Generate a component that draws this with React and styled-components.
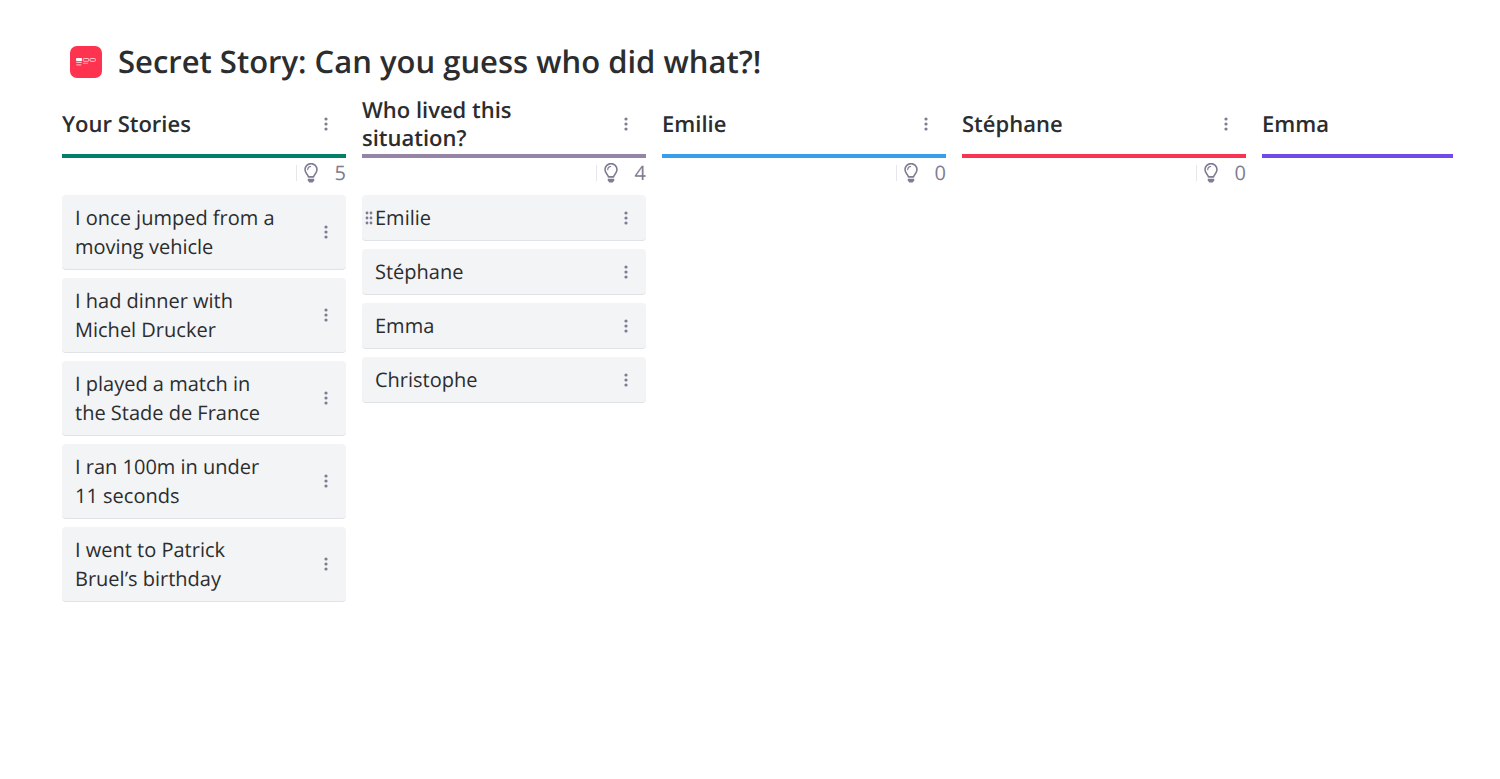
import React from 'react';
import styled, { createGlobalStyle } from 'styled-components';

const GlobalStyle = createGlobalStyle`
  * {
    box-sizing: border-box;
  }

  body {
    margin: 0;
    background-color: #fff;
    color: #2b2d2f;
    font-family: 'Open Sans', 'Noto Sans', sans-serif;
    text-rendering: geometricPrecision;
  }
`;

const Page = styled.main`
  padding: 30px 47px 32px 62px;
`;

const Header = styled.header`
  display: flex;
  align-items: center;
  gap: 16px;
  height: 64px;
  padding-left: 8px;
`;

const Logo = styled.svg`
  flex-shrink: 0;
  width: 32px;
  height: 32px;
`;

const Title = styled.h1`
  margin: 0;
  font-size: 31px;
  font-weight: 600;
  line-height: 40px;
`;

const Board = styled.div`
  display: flex;
  align-items: flex-start;
  gap: 16px;
  overflow: hidden;
`;

const ColumnWrapper = styled.section`
  flex: ${({ $partial }) => ($partial ? '0 1 284px' : '0 0 284px')};
  min-width: 0;
`;

const ColumnHeader = styled.div`
  display: flex;
  align-items: center;
  height: 64px;
  border-bottom: 4px solid ${({ $color }) => $color};
`;

const ColumnTitle = styled.h2`
  flex: 1;
  margin: 0;
  font-size: 22px;
  font-weight: 600;
  line-height: 28px;
`;

const MenuButton = styled.button`
  display: flex;
  align-items: center;
  justify-content: center;
  flex-shrink: 0;
  width: 40px;
  height: 28px;
  padding: 0;
  border: none;
  background: none;
  color: #7e7b92;
  cursor: pointer;
`;

const Counter = styled.div`
  display: flex;
  align-items: center;
  justify-content: flex-end;
  height: 29px;
  margin-bottom: 8px;
  color: #7e7b92;
  font-size: 20px;
`;

const CounterIcon = styled.span`
  display: flex;
  align-items: center;
  height: 16px;
  padding-left: 6px;
  margin-right: 16px;
  border-left: 1px solid #e6e7ec;
`;

const CardList = styled.ul`
  display: flex;
  flex-direction: column;
  gap: 8px;
  margin: 0;
  padding: 0;
  list-style: none;
`;

const Card = styled.li`
  position: relative;
  display: flex;
  align-items: center;
  padding: 8px 0 8px 13px;
  border-bottom: 1px solid #dfe2e6;
  border-radius: 4px;
  background-color: #f3f4f6;
`;

const CardText = styled.p`
  flex: 1;
  margin: 0;
  padding-right: 31px;
  font-size: 20px;
  line-height: 29px;
`;

const DragHandle = styled.svg`
  position: absolute;
  top: 16px;
  left: 3px;
  width: 8px;
  height: 14px;
  fill: #7e7b92;
`;

const columns = [
  {
    title: 'Your Stories',
    color: '#04806a',
    cards: [
      'I once jumped from a moving vehicle',
      'I had dinner with Michel Drucker',
      'I played a match in the Stade de France',
      'I ran 100m in under 11 seconds',
      'I went to Patrick Bruel’s birthday',
    ],
  },
  {
    title: 'Who lived this situation?',
    color: '#9684a7',
    cards: ['Emilie', 'Stéphane', 'Emma', 'Christophe'],
    active: 0,
  },
  { title: 'Emilie', color: '#379eeb', cards: [] },
  { title: 'Stéphane', color: '#f93450', cards: [] },
  { title: 'Emma', color: '#704be8', cards: [], partial: true },
];

const Menu = ({ label }) => (
  <MenuButton type="button" aria-label={label}>
    <svg width="4" height="14" viewBox="0 0 4 14" fill="currentColor">
      <circle cx="2" cy="2" r="1.6" />
      <circle cx="2" cy="7" r="1.6" />
      <circle cx="2" cy="12" r="1.6" />
    </svg>
  </MenuButton>
);

const Bulb = () => (
  <svg width="16" height="20" viewBox="0 0 16 20" fill="none" stroke="currentColor">
    <path
      d="M5.4 13.9C5.2 11.5 2 10.3 2 6.6a6 6 0 0 1 12 0c0 3.7-3.2 4.9-3.4 7.3z"
      strokeWidth="1.6"
      strokeLinejoin="round"
    />
    <path d="M4.7 6.8a3.3 3.3 0 0 1 3-3.3" strokeWidth="1.1" strokeLinecap="round" />
    <path d="M4.8 15.7h6.4v1.8L9.7 19.4H6.3L4.8 17.5z" fill="currentColor" stroke="none" />
  </svg>
);

const Column = ({ title, color, cards, active, partial }) => (
  <ColumnWrapper $partial={partial}>
    <ColumnHeader $color={color}>
      <ColumnTitle>{title}</ColumnTitle>
      {!partial && <Menu label={`${title} options`} />}
    </ColumnHeader>
    {!partial && (
      <Counter>
        <CounterIcon>
          <Bulb />
        </CounterIcon>
        {cards.length}
      </Counter>
    )}
    <CardList>
      {cards.map((text, index) => (
        <Card key={text}>
          {index === active && (
            <DragHandle viewBox="0 0 8 14">
              {[2, 7, 12].map((y) => (
                <React.Fragment key={y}>
                  <circle cx="2" cy={y} r="1.4" />
                  <circle cx="6" cy={y} r="1.4" />
                </React.Fragment>
              ))}
            </DragHandle>
          )}
          <CardText>{text}</CardText>
          <Menu label={`${text} options`} />
        </Card>
      ))}
    </CardList>
  </ColumnWrapper>
);

const App = () => (
  <>
    <GlobalStyle />
    <Page>
      <Header>
        <Logo viewBox="0 0 32 32">
          <rect width="32" height="32" rx="7" fill="#fd334f" />
          <g fill="#fff">
            <rect x="6" y="12" width="6" height="3" rx="0.8" />
            <rect x="6.3" y="15.8" width="5.5" height="1" opacity="0.8" />
            <rect x="6.3" y="18.4" width="5" height="1" opacity="0.7" />
            <rect x="13" y="16.8" width="5" height="0.9" opacity="0.6" />
          </g>
          <g fill="none" stroke="#fff" strokeWidth="0.9" opacity="0.8">
            <rect x="13.3" y="12.5" width="5.4" height="2.8" rx="0.8" />
            <rect x="20" y="12.5" width="5.4" height="2.8" rx="0.8" />
          </g>
        </Logo>
        <Title>Secret Story: Can you guess who did what?!</Title>
      </Header>
      <Board>
        {columns.map((column) => (
          <Column key={column.title} {...column} />
        ))}
      </Board>
    </Page>
  </>
);

export default App;
